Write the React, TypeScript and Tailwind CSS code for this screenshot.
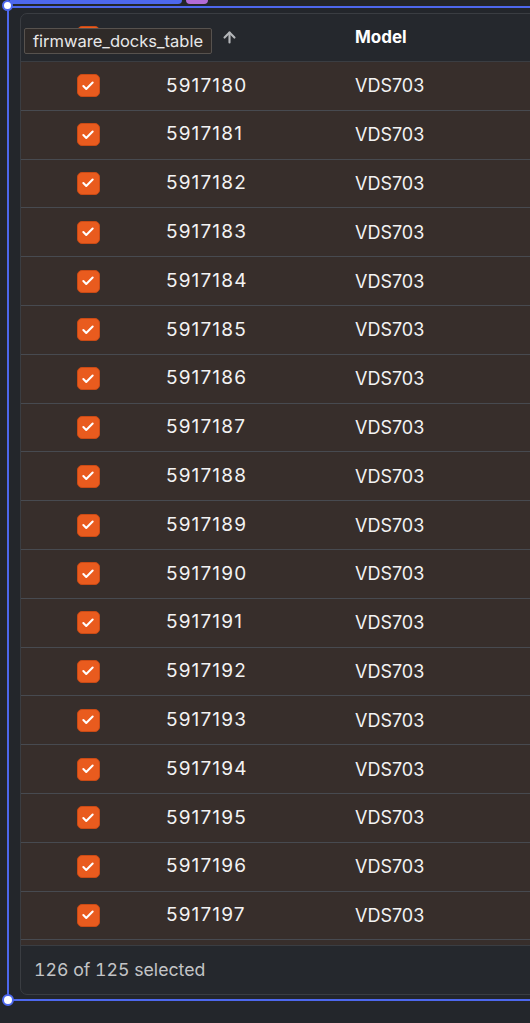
import { ArrowUp, Check } from "lucide-react";

const rows = Array.from({ length: 18 }, (_, i) => ({
  id: 5917180 + i,
  model: "VDS703",
}));

const Checkbox = () => (
  <div className="flex h-[23px] w-[23px] items-center justify-center rounded-[5px] border border-[#c94a15] bg-[#e95b1e]">
    <Check size={14} strokeWidth={3.5} className="text-white" />
  </div>
);

export default function App() {
  return (
    <div className="relative h-[1023px] w-[530px] overflow-hidden bg-[#23262b] font-['Inter',sans-serif]">
      {/* table card */}
      <div className="pl-[20px] pt-[13px]">
        <div className="flex h-[982px] w-[560px] flex-col overflow-hidden rounded-[7px] border border-[#3a3d42] bg-[#25282d]">
          {/* header */}
          <div className="flex h-[48px] shrink-0 items-center border-b border-[#3a3d42]">
            <div className="flex w-[134px] justify-center">
              <Checkbox />
            </div>
            <div className="flex w-[189px] items-center pl-[66px]">
              <ArrowUp size={17} strokeWidth={3} className="text-[#b4b6b9]" />
            </div>
            <div className="pl-[11px] text-[17px] font-bold text-white">Model</div>
          </div>

          {/* body */}
          <div className="flex-1 overflow-hidden bg-[#372e2b]">
            {rows.map((r) => (
              <div
                key={r.id}
                className="flex h-[48.8px] items-center border-b border-[#474a50] bg-[#372e2b] text-[#f3f3f3]"
              >
                <div className="flex w-[134px] justify-center">
                  <Checkbox />
                </div>
                <div className="w-[189px] pl-[11px] text-[19px] tracking-[0.06em]">{r.id}</div>
                <div className="pl-[11px] text-[18px]">{r.model}</div>
              </div>
            ))}
          </div>

          {/* footer */}
          <div className="flex h-[49px] shrink-0 items-center border-t border-[#3a3d42] px-[13px] text-[17.7px] tabular-nums text-[#c3c4c6]">
            126 of 125 selected
          </div>
        </div>
      </div>

      {/* tooltip */}
      <div className="absolute left-[24px] top-[28px] flex h-[26px] w-[188px] items-center rounded-[2px] border border-[#57524e] bg-[#2f2a28] pl-[8px] text-[16.5px] text-[#e8e8e8]">
        firmware_docks_table
      </div>

      {/* selection frame */}
      <div className="absolute left-[10px] top-0 h-[4px] w-[172px] rounded-br-[4px] bg-[#4d68ee]" />
      <div className="absolute left-[186px] top-0 h-[4px] w-[22px] rounded-b-[5px] bg-[#b36bd6]" />
      <div className="absolute left-[7px] top-[6px] h-[2px] w-[523px] bg-[#4d68ee]" />
      <div className="absolute left-[7px] top-[6px] h-[994px] w-[2px] bg-[#4d68ee]" />
      <div className="absolute left-[7px] top-[999px] h-[2px] w-[523px] bg-[#4d68ee]" />
      <div className="absolute left-[2px] top-[0px] h-[11px] w-[11px] rounded-full border-2 border-[#4d68ee] bg-white" />
      <div className="absolute left-[2px] top-[994px] h-[12px] w-[12px] rounded-full border-2 border-[#4d68ee] bg-white" />
    </div>
  );
}
